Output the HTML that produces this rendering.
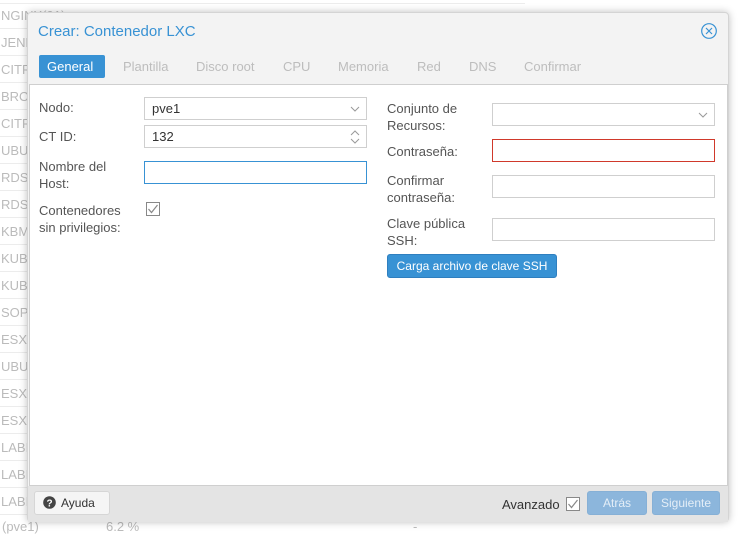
<!DOCTYPE html>
<html><head><meta charset="utf-8"><style>
*{box-sizing:border-box;margin:0;padding:0}
body{width:753px;height:535px;overflow:hidden;background:#fff;font-family:"Liberation Sans",Helvetica,Arial,sans-serif;font-size:13px;color:#333;position:relative}
.bg{position:absolute;left:0;top:0;width:753px;height:535px}
.row{position:absolute;left:0;width:90px;height:27px;border-bottom:1px solid #ececec;color:#bbb;font-size:13px;line-height:27px;padding-left:1px;white-space:nowrap;overflow:hidden}
.dlg{position:absolute;left:27px;top:12px;width:702px;height:510px;background:#f3f3f3;border:1px solid #d4d4d4;border-radius:4px;box-shadow:0 0 8px rgba(0,0,0,.25)}
.title{position:absolute;left:10px;top:10px;color:#3892d4;font-size:15px}
.close{position:absolute;left:672px;top:9px}
.tab{position:absolute;top:42px;height:23px;line-height:23px;color:#bdbdbd;font-size:13px}
.tab.act{background:#3892d4;color:#fff;border-radius:2px;padding:0 8px;left:11px;width:66px}
.body{position:absolute;left:1px;top:71px;width:699px;height:402px;background:#fff;border:1px solid #cfcfcf}
.lbl{position:absolute;color:#555;font-size:13px;line-height:17px}
.fld{position:absolute;height:23px;border:1px solid #cfcfcf;background:#fff;padding-left:7px;line-height:21px;color:#333}
.btn{position:absolute;height:24px;line-height:22px;border-radius:3px;text-align:center;font-size:12px}
.foot{position:absolute;left:0;top:473px;width:700px;height:36px;background:#e4e4e4}
</style></head><body>
<div class="bg">
<div style="position:absolute;left:0;top:3px;width:525px;border-top:1px solid #ededed"></div>
<div class="row" style="top:2px">NGINX(91)</div>
<div class="row" style="top:29px">JENKINS</div>
<div class="row" style="top:56px">CITRIX</div>
<div class="row" style="top:83px">BROKER</div>
<div class="row" style="top:110px">CITRIX</div>
<div class="row" style="top:137px">UBUNTU</div>
<div class="row" style="top:164px">RDS</div>
<div class="row" style="top:191px">RDS</div>
<div class="row" style="top:218px">KBM</div>
<div class="row" style="top:245px">KUB</div>
<div class="row" style="top:272px">KUB</div>
<div class="row" style="top:299px">SOP</div>
<div class="row" style="top:326px">ESX7</div>
<div class="row" style="top:353px">UBU</div>
<div class="row" style="top:380px">ESX7</div>
<div class="row" style="top:407px">ESX7</div>
<div class="row" style="top:434px">LABI</div>
<div class="row" style="top:461px">LABI</div>
<div class="row" style="top:488px">LABI</div>
<div style="position:absolute;left:2px;top:519px;color:#bbb">(pve1)</div>
<div style="position:absolute;left:106px;top:519px;color:#bbb">6.2 %</div>
<div style="position:absolute;left:413px;top:519px;color:#bbb">-</div>
</div>

<div class="dlg">
<div class="title">Crear: Contenedor LXC</div>
<svg class="close" width="18" height="18" viewBox="0 0 18 18"><circle cx="9" cy="9" r="7.3" fill="none" stroke="#3892d4" stroke-width="1.2"/><path d="M6 6L12 12M12 6L6 12" stroke="#3892d4" stroke-width="1.2"/></svg>
<div class="tab act">General</div>
<div class="tab" style="left:95px">Plantilla</div>
<div class="tab" style="left:168px">Disco root</div>
<div class="tab" style="left:255px">CPU</div>
<div class="tab" style="left:310px">Memoria</div>
<div class="tab" style="left:389px">Red</div>
<div class="tab" style="left:441px">DNS</div>
<div class="tab" style="left:496px">Confirmar</div>

<div class="body">
<div class="lbl" style="left:9px;top:14px">Nodo:</div>
<div class="fld" style="left:114px;top:12px;width:223px">pve1
<svg style="position:absolute;right:6px;top:8px" width="10" height="6"><path d="M1 1L5 5L9 1" fill="none" stroke="#999"/></svg></div>
<div class="lbl" style="left:9px;top:43px">CT ID:</div>
<div class="fld" style="left:114px;top:40px;width:223px">132
<svg style="position:absolute;right:6px;top:3px" width="10" height="16"><path d="M1 6L5 2L9 6M1 10L5 14L9 10" fill="none" stroke="#999"/></svg></div>
<div class="lbl" style="left:9px;top:73px">Nombre del<br>Host:</div>
<div class="fld" style="left:114px;top:76px;width:223px;border:1px solid #3892d4"></div>
<div class="lbl" style="left:9px;top:117px">Contenedores<br>sin privilegios:</div>
<svg style="position:absolute;left:116px;top:117px" width="14" height="14"><rect x=".5" y=".5" width="13" height="13" fill="#fff" stroke="#888"/><path d="M2.5 7L5.5 10.5L11.5 3" fill="none" stroke="#888" stroke-width="1.2"/></svg>

<div class="lbl" style="left:357px;top:15px">Conjunto de<br>Recursos:</div>
<div class="fld" style="left:462px;top:18px;width:223px">
<svg style="position:absolute;right:6px;top:8px" width="10" height="6"><path d="M1 1L5 5L9 1" fill="none" stroke="#999"/></svg></div>
<div class="lbl" style="left:357px;top:58px">Contraseña:</div>
<div class="fld" style="left:462px;top:54px;width:223px;border:1px solid #d0392b"></div>
<div class="lbl" style="left:357px;top:87px">Confirmar<br>contraseña:</div>
<div class="fld" style="left:462px;top:90px;width:223px"></div>
<div class="lbl" style="left:357px;top:130px">Clave pública<br>SSH:</div>
<div class="fld" style="left:462px;top:133px;width:223px"></div>
<div class="btn" style="left:357px;top:169px;width:170px;background:#3892d4;color:#fff;border:1px solid #2f7fbf">Carga archivo de clave SSH</div>
</div>

<div class="foot">
<div class="btn" style="left:6px;top:5px;width:76px;background:#f5f5f5;border:1px solid #d6d6d6;color:#333;text-align:left;padding-left:8px">
<svg style="vertical-align:-2px;margin-right:5px" width="13" height="13"><circle cx="6.5" cy="6.5" r="6.3" fill="#444"/><text x="6.5" y="10.5" font-size="10" font-weight="bold" text-anchor="middle" fill="#fff" font-family="Liberation Sans">?</text></svg>Ayuda</div>
<div style="position:absolute;left:474px;top:11px;color:#333">Avanzado</div>
<svg style="position:absolute;left:538px;top:11px" width="14" height="14"><rect x=".5" y=".5" width="13" height="13" fill="#fff" stroke="#888"/><path d="M2.5 7L5.5 10.5L11.5 3" fill="none" stroke="#888" stroke-width="1.2"/></svg>
<div class="btn" style="left:559px;top:5px;width:60px;background:#8cb6dc;color:#e4eef7;border:1px solid #86b0d6">Atrás</div>
<div class="btn" style="left:624px;top:5px;width:68px;background:#8cb6dc;color:#e4eef7;border:1px solid #86b0d6">Siguiente</div>
</div>
</div>
</body></html>
